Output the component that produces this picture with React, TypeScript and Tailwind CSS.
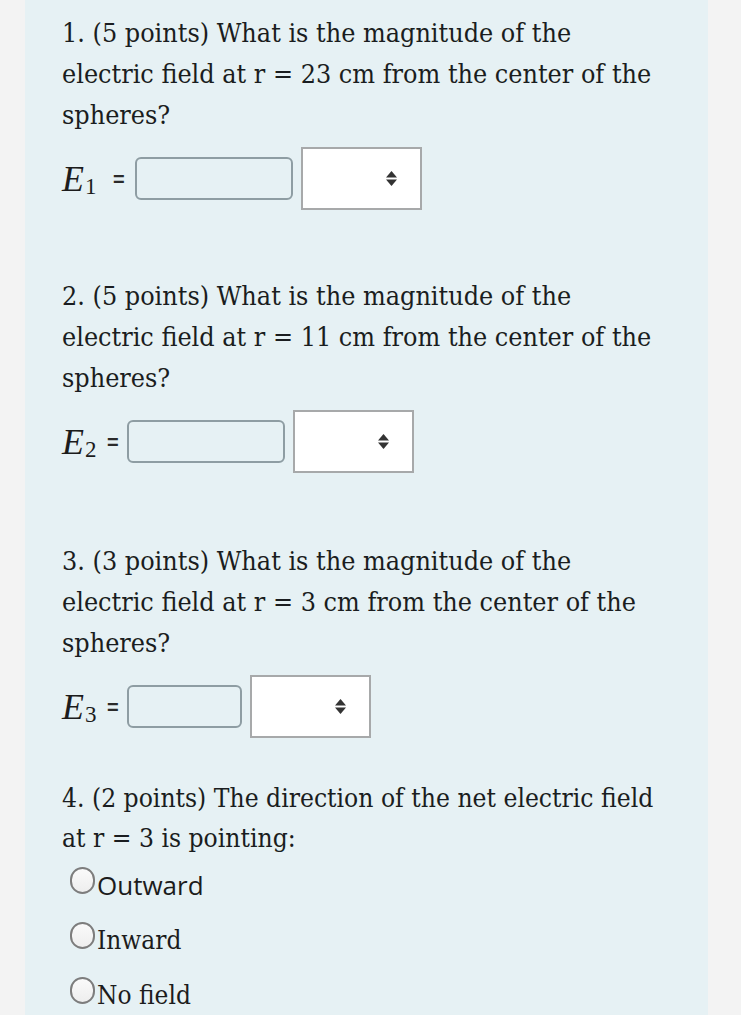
import React from "react";

const serif = "font-['DejaVu_Serif_Condensed','DejaVu_Serif',serif] font-stretch-condensed";

function Arrows() {
  return (
    <svg width="13" height="17" viewBox="0 0 13 17" className="text-[#333]">
      <path d="M6.5 1 L12 7.5 H1 Z" fill="currentColor" />
      <path d="M6.5 16 L12 9.5 H1 Z" fill="currentColor" />
    </svg>
  );
}

function AnswerRow({
  sub,
  labelW,
  inputMl,
  inputW,
}: {
  sub: string;
  labelW: string;
  inputMl: string;
  inputW: string;
}) {
  return (
    <div className="flex items-center h-[63px] mt-[12px]">
      <div className={`flex items-center ${labelW} shrink-0`}>
        <span className="font-['Liberation_Serif',serif] italic text-[36px] text-[#1c1c1c] leading-none pr-[1px]">E</span>
        <span className="font-['Liberation_Serif',serif] text-[23px] text-[#1c1c1c] leading-none mt-[16px]">{sub}</span>
      </div>
      <span className="font-['Liberation_Sans',sans-serif] font-bold text-[20px] text-[#2a2a2a] leading-none">=</span>
      <div className={`${inputMl} ${inputW} h-[43px] rounded-[6px] border-2 border-[#8e9da3]`} />
      <div className="ml-[8px] w-[121px] h-[63px] bg-white border-2 border-[#a7a9aa] flex items-center justify-end pr-[22px]">
        <Arrows />
      </div>
    </div>
  );
}

function Radio({ label, sans }: { label: string; sans?: boolean }) {
  return (
    <div className="flex items-end h-[55px] pb-[12px]">
      <div className="w-[25px] h-[27px] rounded-full border-2 border-[#7d7d7d] bg-gradient-to-b from-[#fafafa] to-[#eeeeee] ml-[8px] mb-[4px] shrink-0" />
      <span
        className={`text-[26px] text-[#1c1c1c] leading-none ml-[2px] ${
          sans ? "font-['Open_Sans',sans-serif]" : serif
        }`}
      >
        {label}
      </span>
    </div>
  );
}

const qText = `${serif} text-[26.7px] leading-[41px] text-[#1a1d20]`;

export default function App() {
  return (
    <div className="w-[741px] h-[1015px] bg-[#f3f3f3] overflow-hidden">
      <div className="ml-[25px] w-[683px] h-full bg-[#e6f1f4] pl-[37px] pt-[12px]">
        <div className={qText}>
          <p>1. (5 points) What is the magnitude of the</p>
          <p>electric field at r = 23 cm from the center of the</p>
          <p>spheres?</p>
        </div>
        <AnswerRow sub="1" labelW="w-[51px]" inputMl="ml-[10px]" inputW="w-[158px]" />

        <div className={`${qText} mt-[65px]`}>
          <p>2. (5 points) What is the magnitude of the</p>
          <p>electric field at r = 11 cm from the center of the</p>
          <p>spheres?</p>
        </div>
        <AnswerRow sub="2" labelW="w-[45px]" inputMl="ml-[8px]" inputW="w-[158px]" />

        <div className={`${qText} mt-[67px]`}>
          <p>3. (3 points) What is the magnitude of the</p>
          <p>electric field at r = 3 cm from the center of the</p>
          <p>spheres?</p>
        </div>
        <AnswerRow sub="3" labelW="w-[45px]" inputMl="ml-[8px]" inputW="w-[115px]" />

        <div className={`${serif} text-[26.2px] leading-[40px] text-[#1a1d20] mt-[40px]`}>
          <p>4. (2 points) The direction of the net electric field</p>
          <p>at r = 3 is pointing:</p>
        </div>
        <div className="-mt-[3px]">
          <Radio label="Outward" sans />
          <Radio label="Inward" />
          <Radio label="No field" />
        </div>
      </div>
    </div>
  );
}
